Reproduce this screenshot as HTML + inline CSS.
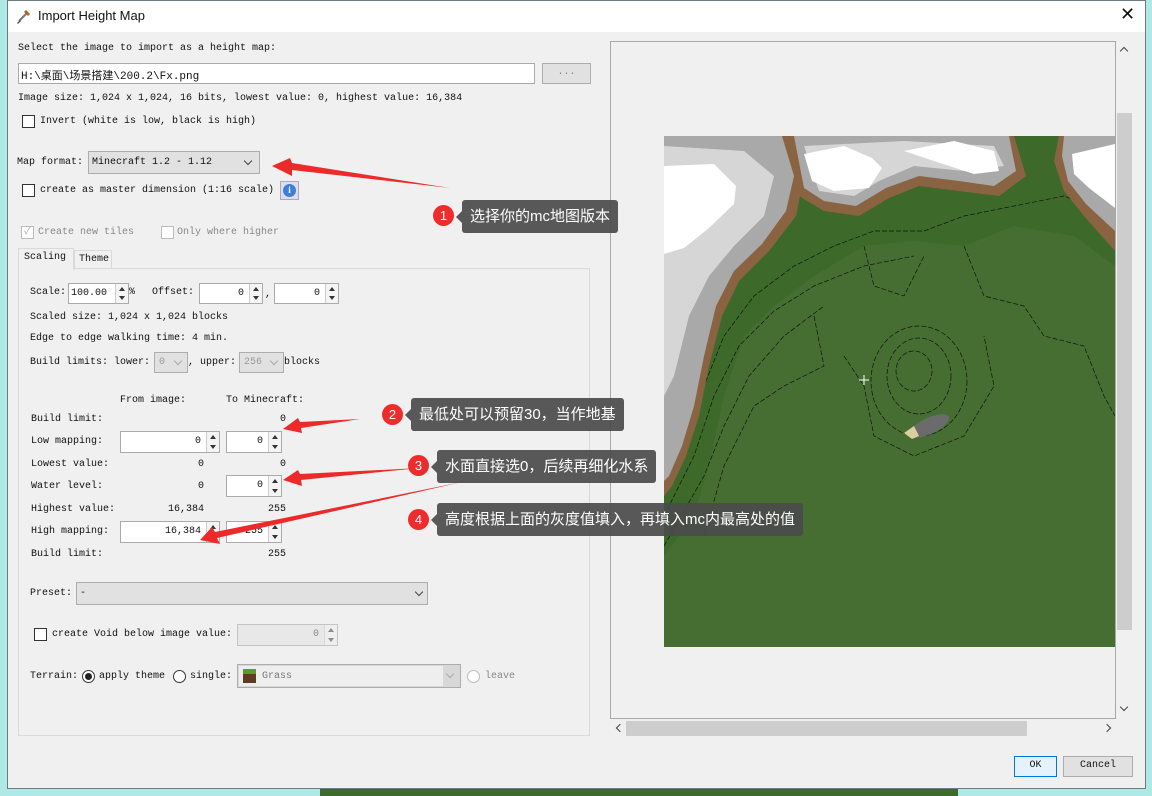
<!DOCTYPE html>
<html><head><meta charset="utf-8"><style>
*{box-sizing:border-box;margin:0;padding:0}
body{width:1152px;height:796px;background:#aee9e6;position:relative;overflow:hidden;font-family:"Liberation Mono","Noto Sans CJK SC",monospace;font-size:10px;color:#111}
.a{position:absolute;white-space:nowrap}
.win{position:absolute;left:7px;top:0;width:1139px;height:789px;background:#f0f0f0;border:1px solid #6d7a80}
.title{position:absolute;left:0;top:0;width:100%;height:31px;background:#fff}
.fld{position:absolute;background:#fff;border:1px solid #aaa}
.dis{background:#e8e8e8;border:1px solid #c4c4c4}
.cb{position:absolute;width:13px;height:13px;border:1px solid #333;background:#fff}
.sp{position:absolute;right:0;top:0;width:13px;height:100%;border-left:1px solid #ccc;background:#f4f4f4}
.sp:before{content:"";position:absolute;left:3px;top:3px;border:3px solid transparent;border-bottom:4px solid #333;border-top:0}
.sp:after{content:"";position:absolute;left:3px;bottom:3px;border:3px solid transparent;border-top:4px solid #333;border-bottom:0}
.num{position:absolute;text-align:right}
.combo{position:absolute;background:#e1e1e1;border:1px solid #adadad}
.chev{position:absolute;width:6px;height:6px;border-right:1px solid #444;border-bottom:1px solid #444;transform:rotate(45deg)}
.tip{position:absolute;background:rgba(75,75,75,.92);color:#fff;font-family:"Liberation Sans","Noto Sans CJK SC",sans-serif;font-size:15px;line-height:33px;padding:0 8px;border-radius:3px}
.tip:before{content:"";position:absolute;left:-6px;top:11px;border:6px solid transparent;border-right:6px solid rgba(75,75,75,.92);border-left:0}
.dot{position:absolute;width:21px;height:21px;border-radius:50%;background:#ee2c2c;color:#fff;font-family:"Liberation Sans",sans-serif;font-size:13px;text-align:center;line-height:21px}
.rad{position:absolute;width:13px;height:13px;border:1px solid #333;border-radius:50%;background:#fff}
.btn{position:absolute;border:1px solid #adadad;background:#e1e1e1;text-align:center;line-height:18px}
</style></head><body>
<div style="position:absolute;left:320px;top:788px;width:638px;height:8px;background:#3f6b2a"></div>
<div class="win">
<div class="title">
<svg class="a" style="left:8px;top:7px" width="16" height="16" viewBox="0 0 16 16"><path d="M3 13 L11 5" stroke="#777" stroke-width="2"/><path d="M10 2 L14 6 L12 8 L8 4Z" fill="#a06a2a"/><path d="M1 15 L4 12 L5 13 L2 16Z" fill="#555"/></svg>
<div class="a" style="left:30px;top:7px;font-family:'Liberation Sans',sans-serif;font-size:13px">Import Height Map</div>
<div class="a" style="left:1112px;top:3px;font-family:'Liberation Sans',sans-serif;font-size:18px;font-weight:300">✕</div>
</div>
</div>
<div class="a" style="left:18px;top:43px">Select the image to import as a height map:</div>
<div class="fld" style="left:18px;top:63px;width:517px;height:21px"><span class="a" style="left:2px;top:3px;font-size:11px">H:\桌面\场景搭建\200.2\Fx.png</span></div>
<div class="btn" style="left:542px;top:63px;width:49px;height:21px;color:#888">...</div>
<div class="a" style="left:18px;top:93px">Image size: 1,024 x 1,024, 16 bits, lowest value: 0, highest value: 16,384</div>
<div class="cb" style="left:22px;top:115px"></div><div class="a" style="left:40px;top:116px">Invert (white is low, black is high)</div>
<div class="a" style="left:17px;top:157px">Map format:</div>
<div class="combo" style="left:88px;top:151px;width:172px;height:23px"><span class="a" style="left:3px;top:5px">Minecraft 1.2 - 1.12</span><div class="chev" style="left:156px;top:6px"></div></div>
<div class="cb" style="left:22px;top:184px"></div><div class="a" style="left:40px;top:185px">create as master dimension (1:16 scale)</div>
<div style="position:absolute;left:280px;top:181px;width:19px;height:19px;border:1px solid #aab;background:#dde"><div style="position:absolute;left:2px;top:2px;width:13px;height:13px;border-radius:50%;background:#3f7fd8;color:#fff;font:bold 9px 'Liberation Serif',serif;text-align:center;line-height:13px">i</div></div>
<div class="cb" style="left:21px;top:226px;border-color:#bbb;color:#aaa;font-size:10px;line-height:11px;text-align:center">✓</div><div class="a" style="left:38px;top:227px;color:#888">Create new tiles</div>
<div class="cb" style="left:161px;top:226px;border-color:#bbb"></div><div class="a" style="left:177px;top:227px;color:#888">Only where higher</div>
<div style="position:absolute;left:18px;top:268px;width:572px;height:468px;border:1px solid #d9d9d9;background:#f0f0f0"></div>
<div style="position:absolute;left:18px;top:248px;width:56px;height:22px;border:1px solid #d9d9d9;border-bottom:none;background:#f0f0f0"></div>
<div class="a" style="left:24px;top:252px">Scaling</div>
<div style="position:absolute;left:74px;top:250px;width:38px;height:18px;border:1px solid #d9d9d9;border-bottom:none;background:#f0f0f0"></div>
<div class="a" style="left:79px;top:254px">Theme</div>

<div class="a" style="left:30px;top:287px">Scale:</div>
<div class="fld" style="left:68px;top:283px;width:61px;height:21px"><span class="a" style="left:2px;top:4px">100.00</span><div class="sp"></div></div>
<div class="a" style="left:129px;top:287px">%</div>
<div class="a" style="left:152px;top:287px">Offset:</div>
<div class="fld" style="left:199px;top:283px;width:64px;height:21px"><span class="num" style="right:18px;top:4px">0</span><div class="sp"></div></div>
<div class="a" style="left:265px;top:289px">,</div>
<div class="fld" style="left:274px;top:283px;width:65px;height:21px"><span class="num" style="right:18px;top:4px">0</span><div class="sp"></div></div>
<div class="a" style="left:30px;top:312px">Scaled size: 1,024 x 1,024 blocks</div>
<div class="a" style="left:30px;top:333px">Edge to edge walking time: 4 min.</div>
<div class="a" style="left:30px;top:357px">Build limits: lower:</div>
<div class="combo dis" style="left:154px;top:352px;width:34px;height:21px;color:#999"><span class="a" style="left:4px;top:4px">0</span><div class="chev" style="left:20px;top:5px;border-color:#aaa"></div></div>
<div class="a" style="left:188px;top:357px">, upper:</div>
<div class="combo dis" style="left:239px;top:352px;width:45px;height:21px;color:#999"><span class="a" style="left:4px;top:4px">256</span><div class="chev" style="left:31px;top:5px;border-color:#aaa"></div></div>
<div class="a" style="left:284px;top:357px">blocks</div>
<div class="a" style="left:120px;top:395px">From image:</div>
<div class="a" style="left:226px;top:395px">To Minecraft:</div>
<div class="a" style="left:31px;top:414px">Build limit:</div><div class="num" style="right:866px;top:414px">0</div>
<div class="a" style="left:31px;top:436px">Low mapping:</div>
<div class="fld" style="left:120px;top:431px;width:100px;height:22px"><span class="num" style="right:18px;top:4px">0</span><div class="sp"></div></div>
<div class="fld" style="left:226px;top:431px;width:56px;height:22px"><span class="num" style="right:18px;top:4px">0</span><div class="sp"></div></div>
<div class="a" style="left:31px;top:459px">Lowest value:</div><div class="num" style="right:948px;top:459px">0</div><div class="num" style="right:866px;top:459px">0</div>
<div class="a" style="left:31px;top:481px">Water level:</div><div class="num" style="right:948px;top:481px">0</div>
<div class="fld" style="left:226px;top:475px;width:56px;height:22px"><span class="num" style="right:18px;top:4px">0</span><div class="sp"></div></div>
<div class="a" style="left:31px;top:504px">Highest value:</div><div class="num" style="right:948px;top:504px">16,384</div><div class="num" style="right:866px;top:504px">255</div>
<div class="a" style="left:31px;top:526px">High mapping:</div>
<div class="fld" style="left:120px;top:521px;width:100px;height:22px"><span class="num" style="right:18px;top:4px">16,384</span><div class="sp"></div></div>
<div class="fld" style="left:226px;top:521px;width:56px;height:22px"><span class="num" style="right:18px;top:4px">255</span><div class="sp"></div></div>
<div class="a" style="left:31px;top:549px">Build limit:</div><div class="num" style="right:866px;top:549px">255</div>
<div class="a" style="left:30px;top:588px">Preset:</div>
<div class="combo" style="left:76px;top:582px;width:352px;height:23px"><span class="a" style="left:3px;top:5px">-</span><div class="chev" style="left:339px;top:6px"></div></div>
<div class="cb" style="left:34px;top:628px"></div><div class="a" style="left:52px;top:629px">create Void below image value:</div>
<div class="fld dis" style="left:237px;top:624px;width:101px;height:22px;color:#888"><span class="num" style="right:18px;top:4px">0</span><div class="sp" style="opacity:.5"></div></div>
<div class="a" style="left:30px;top:671px">Terrain:</div>
<div class="rad" style="left:82px;top:670px"><div style="position:absolute;left:2px;top:2px;width:7px;height:7px;border-radius:50%;background:#222"></div></div>
<div class="a" style="left:99px;top:671px">apply theme</div>
<div class="rad" style="left:173px;top:670px"></div><div class="a" style="left:190px;top:671px">single:</div>
<div class="combo dis" style="left:237px;top:664px;width:224px;height:24px;background:#d8d8d8"><div style="position:absolute;left:1px;top:1px;width:204px;height:20px;background:#eee"></div><div class="a" style="left:5px;top:4px;width:13px;height:14px;background:#5a3d22;border-top:5px solid #5b9a2e"></div><span class="a" style="left:24px;top:6px;color:#777">Grass</span><div class="chev" style="left:209px;top:6px;border-color:#aaa"></div></div>
<div class="rad" style="left:467px;top:670px;border-color:#bbb"></div><div class="a" style="left:485px;top:671px;color:#888">leave</div>

<div style="position:absolute;left:610px;top:41px;width:506px;height:678px;border:1px solid #a8a8a8;background:#f0f0f0"></div>
<svg class="a" style="left:664px;top:136px" width="451" height="511" viewBox="0 0 451 511">
<rect width="451" height="511" fill="#466e33"/>
<g fill="#3d6a2b"><path d="M0 0H451V130L410 100 350 90 300 110 250 105 200 110 150 140 110 170 80 200 60 260 45 330 30 380 0 420Z"/></g>
<g stroke="#111" stroke-width="0.7" fill="none" stroke-dasharray="5 2">
<path d="M0 350 20 300 40 250 60 200 90 160 130 130 170 110 210 95 260 95 300 80 350 70 400 60 451 80"/>
<path d="M0 380 30 320 50 260 75 210 110 175 150 150 200 130 250 120"/>
<path d="M0 410 40 340 60 290 85 240 120 200 160 170"/>
<path d="M150 180 160 230 120 250 90 270 60 330 40 400"/>
<path d="M200 110 210 150 240 160 260 120"/>
<path d="M300 110 320 160 360 170 380 200 420 210 440 260 451 280"/>
<ellipse cx="255" cy="245" rx="48" ry="55"/><ellipse cx="255" cy="240" rx="32" ry="38"/><ellipse cx="250" cy="235" rx="18" ry="20"/>
<path d="M180 220 200 250 210 300 250 320 300 300 330 250 320 200"/>
</g>
<g fill="#8a6442">
<path d="M0 0H125L140 40 132 80 105 115 75 145 58 180 45 230 35 280 22 320 8 350 0 360Z"/>
<path d="M125 0H350L362 40 335 60 295 55 255 50 225 62 195 80 160 75 135 60Z"/>
<path d="M395 0H451V115L420 80 400 55 390 25Z"/>
</g>
<g fill="#a9a9a9">
<path d="M0 0H118L130 40 122 75 98 108 70 135 52 170 40 220 30 270 18 310 5 340 0 345Z"/>
<path d="M130 0H345L352 35 330 50 295 45 255 40 222 52 192 70 160 65 140 52Z"/>
<path d="M400 0H451V95L422 68 404 45 398 20Z"/>
</g>
<g fill="#d6d6d6"><path d="M0 10 80 15 110 40 100 80 70 110 45 140 25 180 10 240 0 260Z"/><path d="M140 10 240 5 330 10 340 30 300 35 250 30 215 45 190 60 155 55Z"/></g>
<g fill="#fff">
<path d="M0 30 50 28 72 50 70 68 45 92 20 112 0 118Z"/>
<path d="M140 18 180 10 208 22 218 32 205 52 170 55 148 45Z"/>
<path d="M240 15 290 5 330 15 335 35 310 38 270 25Z"/>
<path d="M408 18 451 8V72L425 52 410 38Z"/>
</g>
<ellipse cx="265" cy="290" rx="22" ry="8" transform="rotate(-25 265 290)" fill="#6b6b6b"/>
<path d="M240 297 250 290 255 300 248 303Z" fill="#d9cfa0"/>
<path d="M195 244h10M200 239v10" stroke="#fff"/>
</svg>
<div style="position:absolute;left:1117px;top:113px;width:15px;height:517px;background:#cdcdcd"></div>
<div class="chev" style="left:1121px;top:48px;transform:rotate(225deg)"></div>
<div class="chev" style="left:1121px;top:704px"></div>
<div style="position:absolute;left:626px;top:721px;width:401px;height:15px;background:#cdcdcd"></div>
<div class="chev" style="left:617px;top:725px;transform:rotate(135deg)"></div>
<div class="chev" style="left:1104px;top:725px;transform:rotate(-45deg)"></div>
<div class="btn" style="left:1014px;top:756px;width:43px;height:21px;border-color:#0078d7;background:#e5f1fb">OK</div>
<div class="btn" style="left:1063px;top:756px;width:70px;height:21px">Cancel</div>

<svg class="a" style="left:0;top:0" width="1152" height="796">
<g fill="#ec2a2a">
<path d="M272 166 L290 158 L292 163 L450 188 L292 170 L292 176Z"/>
<path d="M283 429 L298 418 L300 422 L360 419 L301 428 L302 433Z"/>
<path d="M283 480 L298 470 L300 474 L420 468 L301 480 L302 486Z"/>
<path d="M200 540 L212 527 L215 532 L462 482 L217 538 L220 544Z"/>
</g></svg>
<div class="dot" style="left:433px;top:205px">1</div><div class="tip" style="left:462px;top:200px">选择你的mc地图版本</div>
<div class="dot" style="left:382px;top:404px">2</div><div class="tip" style="left:411px;top:398px">最低处可以预留30，当作地基</div>
<div class="dot" style="left:408px;top:455px">3</div><div class="tip" style="left:437px;top:450px">水面直接选0，后续再细化水系</div>
<div class="dot" style="left:408px;top:509px">4</div><div class="tip" style="left:437px;top:503px">高度根据上面的灰度值填入，再填入mc内最高处的值</div>
</body></html>
